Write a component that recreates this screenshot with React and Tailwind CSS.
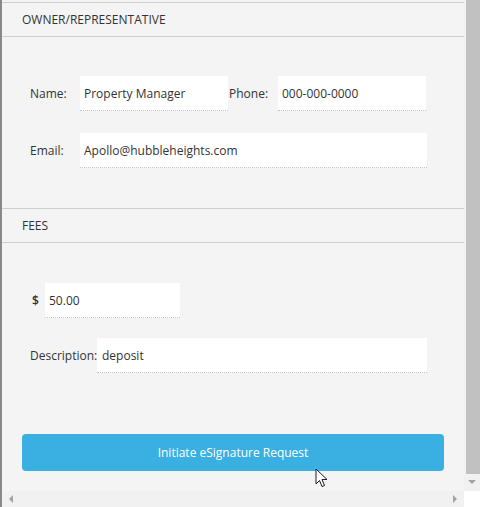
import React from 'react';

const inputCls =
  "h-[35px] bg-white border-b border-dotted border-[#c4c4c4] px-[4px] pt-[2px] text-[12px] text-[#333] outline-none";

function SectionHeader({ title }) {
  return (
    <div className="h-[35px] border-y border-[#cfcfcf] flex items-center pl-[20px] text-[12px] text-[#333] uppercase">
      {title}
    </div>
  );
}

function Field({ value, className }) {
  return (
    <div className={`${inputCls} flex items-center ${className}`}>
      {value}
    </div>
  );
}

export default function App() {
  return (
    <div className="relative w-[480px] h-[507px] flex flex-col bg-white font-['Open_Sans',sans-serif] overflow-hidden">
      <div className="flex flex-1 min-h-0">
        {/* Main panel */}
        <div className="flex-1 bg-[#f4f4f4] border-l-2 border-[#868b89] pt-[2px] flex flex-col">
          <SectionHeader title="Owner/Representative" />
          <div className="pt-[39px] pb-[40px] pl-[28px] flex flex-col gap-[22px]">
            <div className="flex items-center">
              <span className="w-[50px] pt-[1px] text-[12px] text-[#333]">Name:</span>
              <Field value="Property Manager" className="w-[148px]" />
              <span className="w-[50px] pl-[1px] pt-[1px] text-[12px] text-[#333]">Phone:</span>
              <Field value="000-000-0000" className="w-[148px]" />
            </div>
            <div className="flex items-center">
              <span className="w-[50px] pt-[1px] text-[12px] text-[#333]">Email:</span>
              <Field value="Apollo@hubbleheights.com" className="w-[347px]" />
            </div>
          </div>

          <SectionHeader title="Fees" />
          <div className="pt-[40px] pl-[28px] flex flex-col gap-[20px]">
            <div className="flex items-center">
              <span className="w-[15px] pl-[2px] pt-[1px] text-[12px] font-semibold text-[#333]">$</span>
              <Field value="50.00" className="w-[135px]" />
            </div>
            <div className="flex items-center">
              <span className="w-[67px] pt-[1px] text-[12px] text-[#333]">Description:</span>
              <Field value="deposit" className="w-[330px] !px-[5px]" />
            </div>
          </div>

          <div className="pt-[61px] px-[20px]">
            <button className="w-full h-[37px] rounded-[4px] bg-[#3aafe1] text-white text-[12px]">
              Initiate eSignature Request
            </button>
          </div>
        </div>

        {/* Vertical scrollbar */}
        <div className="w-[16px] bg-[#f1f1f1] flex flex-col">
          <div className="flex-1 ml-[2px] bg-[#c1c1c1]" />
          <div className="h-[17px] flex items-center justify-center">
            <svg width="8" height="5" viewBox="0 0 8 5">
              <path d="M0 0 L8 0 L4 4 Z" fill="#a3a3a3" />
            </svg>
          </div>
        </div>
      </div>

      {/* Horizontal scrollbar */}
      <div className="h-[16px] flex">
        <div className="flex-1 bg-[#f1f1f1] border-l-2 border-[#868b89] flex items-center justify-between px-[6px]">
          <svg width="5" height="8" viewBox="0 0 5 8">
            <path d="M5 0 L5 8 L1 4 Z" fill="#a3a3a3" />
          </svg>
          <svg width="5" height="8" viewBox="0 0 5 8">
            <path d="M0 0 L0 8 L4 4 Z" fill="#a3a3a3" />
          </svg>
        </div>
        <div className="w-[16px] bg-white" />
      </div>

      {/* Mouse cursor */}
      <svg className="absolute left-[315px] top-[468px]" width="14" height="20" viewBox="0 0 14 20">
        <path d="M1 1 L1 16 L4.5 12.5 L7 18.5 L9.5 17.5 L7 11.5 L12 11.5 Z" fill="#fff" stroke="#1b1b2b" strokeWidth="1" strokeLinejoin="round" />
      </svg>
    </div>
  );
}
